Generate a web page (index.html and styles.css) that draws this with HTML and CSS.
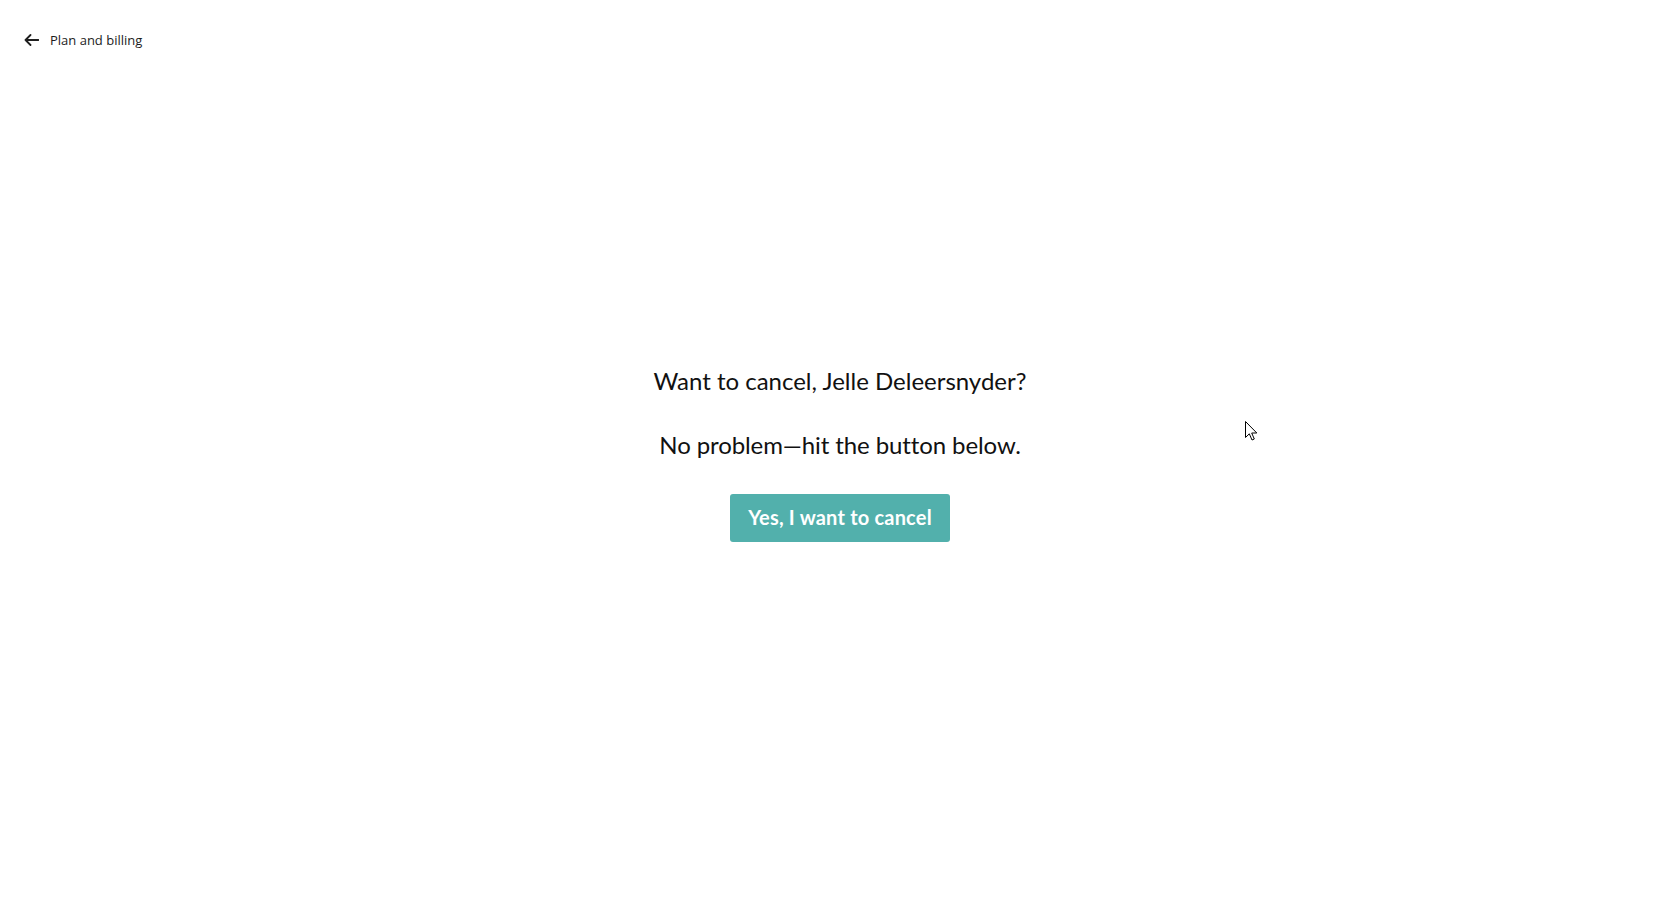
FILE: index.html
```html
<!DOCTYPE html>
<html lang="en">
<head>
<meta charset="utf-8">
<title>Cancel plan</title>
<link rel="stylesheet" href="styles.css">
</head>
<body>
<div class="page">
  <header class="topbar">
    <a class="back" href="#">
      <svg class="back-icon" width="15" height="12" viewBox="0 0 15 12" aria-hidden="true">
        <path d="M14.5 6H1.5M6.5 1L1.5 6l5 5" fill="none" stroke="#1f1f1f" stroke-width="1.8" stroke-linecap="round" stroke-linejoin="round"/>
      </svg>
      <span>Plan and billing</span>
    </a>
  </header>
  <main class="content">
    <p class="line">Want to cancel, Jelle Deleersnyder?</p>
    <p class="line second">No problem—hit the button below.</p>
    <button class="cancel-btn" type="button">Yes, I want to cancel</button>
  </main>
</div>
<svg class="cursor" width="13" height="20" viewBox="0 0 13 20" aria-hidden="true">
  <path d="M0.5 0.5 L0.5 16.5 L4.3 12.8 L7 19 L9.3 18 L6.7 12 L11.8 12 Z" fill="#fff" stroke="#000" stroke-width="1" stroke-linejoin="miter"/>
</svg>
</body>
</html>
```
FILE: styles.css
```css
html, body {
  margin: 0;
  padding: 0;
  background: #ffffff;
}
body {
  font-family: "Lato", "Open Sans", sans-serif;
  color: #111111;
}
.page {
  height: 100vh;
  display: flex;
  flex-direction: column;
}
.topbar {
  height: 80px;
  padding: 30px 24px 0;
  box-sizing: border-box;
}
.back {
  display: inline-flex;
  align-items: center;
  gap: 11px;
  text-decoration: none;
  color: #1c1c1c;
  font-family: "Open Sans", "Noto Sans", sans-serif;
  font-size: 13px;
  line-height: 20px;
}
.back-icon {
  display: block;
}
.content {
  flex: 1;
  display: flex;
  flex-direction: column;
  align-items: center;
  justify-content: center;
  padding-bottom: 80px;
}
.line {
  margin: 0;
  font-size: 24px;
  line-height: 32px;
  color: #111111;
  letter-spacing: 0;
}
.second {
  margin-top: 32px;
  letter-spacing: -0.1px;
}
.cancel-btn {
  margin-top: 33px;
  width: 220px;
  height: 48px;
  border: none;
  border-radius: 3px;
  background: #52b0ac;
  color: #ffffff;
  font-family: "Lato", sans-serif;
  font-weight: 700;
  font-size: 20px;
  letter-spacing: 0.2px;
  padding: 0 0 3px;
  cursor: pointer;
}
.cursor {
  position: absolute;
  left: 1245px;
  top: 421px;
  pointer-events: none;
}
```
